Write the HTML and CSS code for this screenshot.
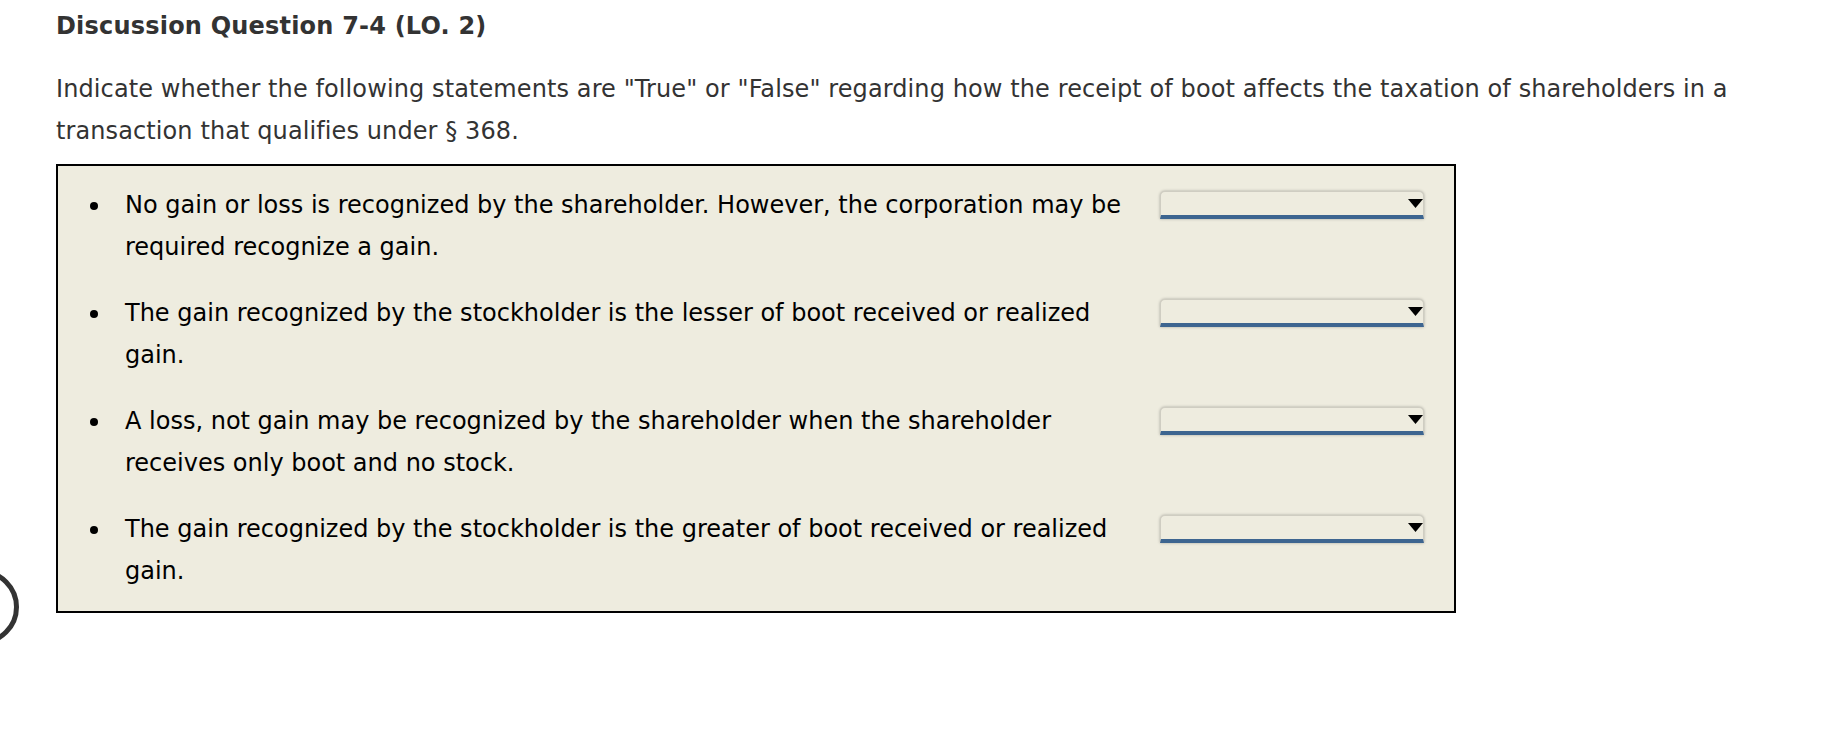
FILE: index.html
```html
<!DOCTYPE html>
<html lang="en">
<head>
<meta charset="utf-8">
<title>Discussion Question 7-4 (LO. 2)</title>
<link rel="stylesheet" href="styles.css">
</head>
<body>
<main class="page">
  <h1 class="title">Discussion Question 7-4 (LO. 2)</h1>
  <p class="intro">Indicate whether the following statements are "True" or "False" regarding how the receipt of boot affects the taxation of shareholders in a transaction that qualifies under § 368.</p>
  <div class="qbox">
    <ul class="items">
      <li class="item">
        <span class="bullet"></span>
        <span class="stmt">No gain or loss is recognized by the shareholder. However, the corporation may be required recognize a gain.</span>
        <span class="pick"><select class="sel"><option></option><option>True</option><option>False</option></select><svg class="arrow" width="15" height="9" viewBox="0 0 15 9"><path d="M0 0H15L7.5 9Z" fill="#000"/></svg></span>
      </li>
      <li class="item">
        <span class="bullet"></span>
        <span class="stmt">The gain recognized by the stockholder is the lesser of boot received or realized gain.</span>
        <span class="pick"><select class="sel"><option></option><option>True</option><option>False</option></select><svg class="arrow" width="15" height="9" viewBox="0 0 15 9"><path d="M0 0H15L7.5 9Z" fill="#000"/></svg></span>
      </li>
      <li class="item">
        <span class="bullet"></span>
        <span class="stmt">A loss, not gain may be recognized by the shareholder when the shareholder receives only boot and no stock.</span>
        <span class="pick"><select class="sel"><option></option><option>True</option><option>False</option></select><svg class="arrow" width="15" height="9" viewBox="0 0 15 9"><path d="M0 0H15L7.5 9Z" fill="#000"/></svg></span>
      </li>
      <li class="item">
        <span class="bullet"></span>
        <span class="stmt">The gain recognized by the stockholder is the greater of boot received or realized gain.</span>
        <span class="pick"><select class="sel"><option></option><option>True</option><option>False</option></select><svg class="arrow" width="15" height="9" viewBox="0 0 15 9"><path d="M0 0H15L7.5 9Z" fill="#000"/></svg></span>
      </li>
    </ul>
  </div>
  <div class="ring"></div>
</main>
</body>
</html>
```
FILE: styles.css
```css
html, body {
  margin: 0;
  padding: 0;
  background: #ffffff;
}
body {
  font-family: "DejaVu Sans", Verdana, sans-serif;
  font-size: 24px;
  color: #333333;
}
.page {
  position: relative;
  padding: 11px 55px 0 56px;
  height: 731px;
  overflow: hidden;
}
.title {
  margin: 0;
  font-size: 24px;
  font-weight: bold;
  line-height: 30px;
  letter-spacing: 0.2px;
  color: #333333;
}
.intro {
  margin: 27px 0 0 0;
  line-height: 42px;
  letter-spacing: 0.1px;
  color: #333333;
}
.qbox {
  margin-top: 12px;
  width: 1396px;
  border: 2px solid #000000;
  background: #eeecdf;
  padding: 18px 0 19px 0;
}
.items {
  list-style: none;
  margin: 0;
  padding: 0;
  display: flex;
  flex-direction: column;
  gap: 24px;
}
.item {
  display: flex;
  align-items: flex-start;
  color: #000000;
  line-height: 42px;
}
.bullet {
  flex: none;
  width: 8px;
  height: 8px;
  border-radius: 50%;
  background: #000000;
  margin: 18px 27px 0 32px;
}
.stmt {
  flex: none;
  width: 1020px;
}
.pick {
  position: relative;
  flex: none;
  margin: 7px 0 0 15px;
  width: 264px;
  height: 28px;
}
.sel {
  display: block;
  appearance: none;
  -webkit-appearance: none;
  width: 264px;
  height: 28px;
  margin: 0;
  padding: 0 24px 0 6px;
  font-family: "DejaVu Sans", Verdana, sans-serif;
  font-size: 16px;
  background: #eeecdf;
  border: 1px solid #cfcdc2;
  border-bottom: 4px solid #3d6590;
  border-radius: 5px 5px 0 0;
  box-shadow: 0 0 3px rgba(0, 0, 0, 0.3);
  color: #000;
}
.arrow {
  position: absolute;
  right: 1px;
  top: 8px;
  pointer-events: none;
}
.ring {
  position: absolute;
  left: -57px;
  top: 569px;
  width: 66px;
  height: 66px;
  border: 5px solid #333333;
  border-radius: 50%;
}
```
